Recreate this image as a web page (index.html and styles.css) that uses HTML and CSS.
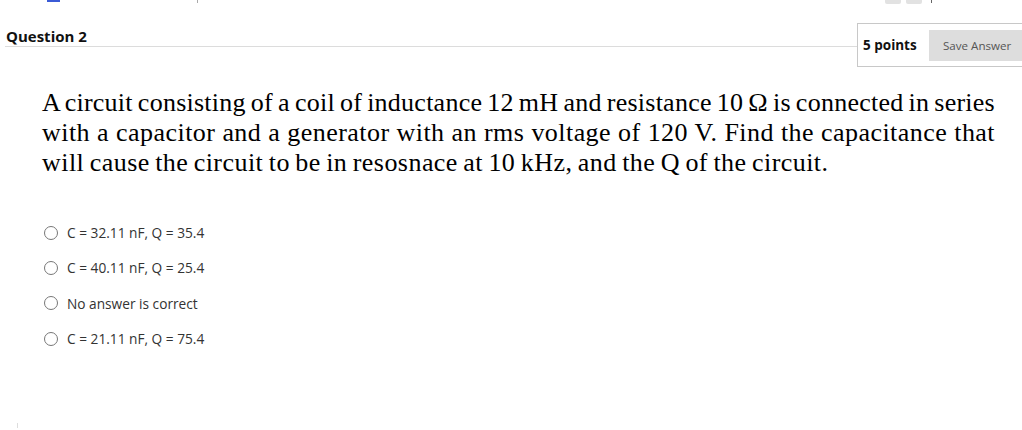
FILE: index.html
```html
<!DOCTYPE html>
<html>
<head>
<meta charset="utf-8">
<link rel="stylesheet" href="styles.css">
</head>
<body>
<div class="topstrip">
  <span class="tab-blue"></span>
  <span class="tick tick-a"></span>
  <span class="nav-btn nav-first"></span>
  <span class="nav-btn"></span>
  <span class="tick tick-b"></span>
</div>
<div class="qhead">
  <div class="qtitle">Question 2</div>
  <div class="points">
    <span class="pts">5 points</span>
    <button class="save">Save Answer</button>
  </div>
</div>
<div class="qbody">
  <p class="qtext"><span class="qline full tight">A circuit consisting of a coil of inductance 12 mH and resistance 10 Ω is connected in series</span> <span class="qline full">with a capacitor and a generator with an rms voltage of 120 V. Find the capacitance that</span> <span class="qline">will cause the circuit to be in resosnace at 10 kHz, and the Q of the circuit.</span></p>
  <ul class="options">
    <li><span class="radio"></span>C = 32.11 nF, Q = 35.4</li>
    <li><span class="radio"></span>C = 40.11 nF, Q = 25.4</li>
    <li><span class="radio"></span>No answer is correct</li>
    <li><span class="radio"></span>C = 21.11 nF, Q = 75.4</li>
  </ul>
</div>
<div class="footmark"></div>
</body>
</html>
```
FILE: styles.css
```css
html, body {
  margin: 0;
  padding: 0;
  background: #fff;
}
body {
  width: 1022px;
  height: 430px;
  overflow: hidden;
  font-family: "Open Sans", "Liberation Sans", sans-serif;
  color: #222;
}
.topstrip {
  display: flex;
  height: 4px;
  overflow: hidden;
  align-items: flex-start;
}
.tab-blue {
  display: block;
  width: 13px;
  height: 2px;
  margin-left: 47px;
  background: #3b5bd6;
}
.tick {
  display: block;
  width: 1px;
  height: 3px;
  background: #aaa;
}
.tick-a { margin-left: 137px; }
.nav-btn {
  display: block;
  width: 16px;
  height: 4px;
  background: #e2e2e2;
  border-radius: 0 0 2px 2px;
  margin-left: 5px;
}
.nav-first { margin-left: 687px; }
.tick-b { margin-left: 9px; background: #666; }

.qhead {
  display: flex;
  align-items: flex-start;
  margin-top: 19px;
}
.qtitle {
  flex: 1;
  margin-left: 5px;
  margin-top: 4px;
  padding-left: 1px;
  height: 19px;
  font-size: 15px;
  font-weight: 700;
  line-height: 19px;
  color: #111;
  border-bottom: 1px solid #dcdcdc;
}
.points {
  width: 165px;
  border: 1px solid #c8c8c8;
  border-right: none;
  display: flex;
  align-items: center;
  box-sizing: border-box;
  height: 44px;
  padding-left: 5px;
}
.pts {
  font-size: 13.5px;
  font-weight: 700;
  color: #111;
  width: 66px;
}
.save {
  height: 31px;
  flex: 1;
  border: none;
  background: #dddddd;
  color: #555;
  font-family: "Open Sans", "Liberation Sans", sans-serif;
  font-size: 11.6px;
  text-align: left;
  padding: 0 0 0 14px;
}
.qbody {
  padding-left: 42px;
  width: 953px;
}
.qtext {
  margin: 21px 0 0 0;
  font-family: "Liberation Serif", "Times New Roman", serif;
  font-size: 26px;
  line-height: 30px;
  word-spacing: -1.5px;
  letter-spacing: 0.45px;
  color: #000;
}
.qline {
  display: block;
  white-space: nowrap;
}
.qline.full {
  text-align: justify;
  text-align-last: justify;
  white-space: normal;
  word-spacing: -5px;
}
.qline.tight {
  letter-spacing: 0.25px;
}
.options {
  list-style: none;
  margin: 37px 0 0 0;
  padding: 0;
}
.options li {
  display: flex;
  align-items: center;
  height: 35.3px;
  font-size: 13.7px;
  color: #333;
}
.radio {
  display: block;
  width: 12px;
  height: 12px;
  border: 1px solid #777;
  border-radius: 50%;
  margin: 0 9px 0 2px;
}
.footmark {
  position: absolute;
  left: 17px;
  top: 423px;
  width: 1px;
  height: 5px;
  background: #ddd;
}
```
